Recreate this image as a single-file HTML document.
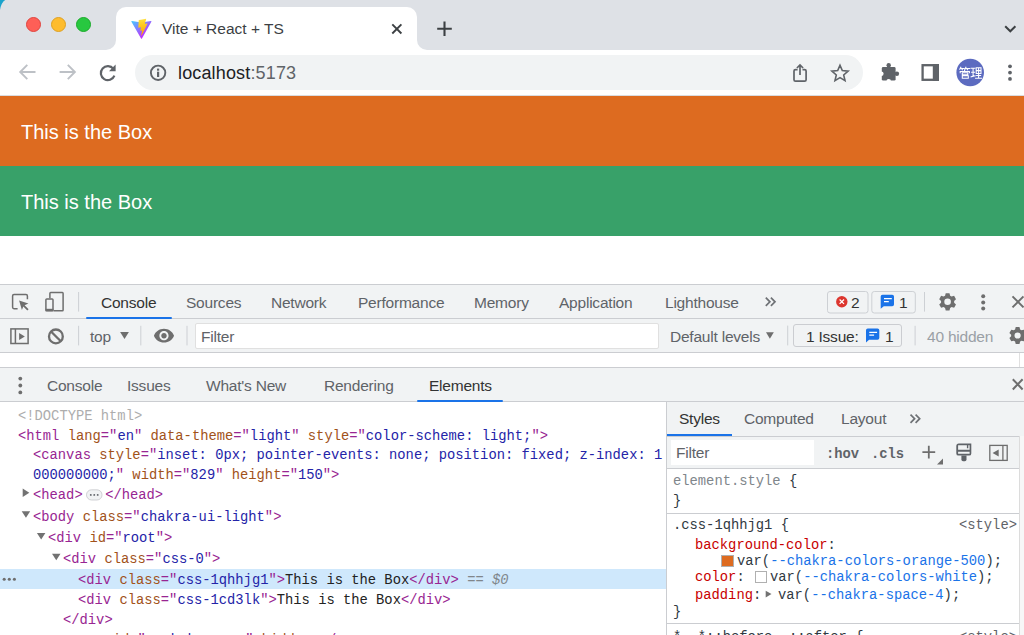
<!DOCTYPE html>
<html><head><meta charset="utf-8">
<style>
*{margin:0;padding:0;box-sizing:border-box}
html,body{width:1024px;height:635px;overflow:hidden;background:#fff;position:relative}
body{font-family:"Liberation Sans",sans-serif}
.a{position:absolute}
.t{position:absolute;white-space:pre;line-height:1}
.s15{font-size:15.5px;letter-spacing:-0.22px}
.m{font-family:"Liberation Mono",monospace;font-size:13.8px}
svg{position:absolute;overflow:visible}
/* devtools colors */
.tg{color:#982592}
.an{color:#a1521a}
.av{color:#2424a8}
.tx{color:#222}
.gr{color:#adadad}
.pn{color:#c80000}
.vn{color:#1a73e8}
</style></head>
<body>
<!-- ===== tab strip ===== -->
<div class="a" style="left:0;top:0;width:1024px;height:50px;background:#dee1e6"></div>
<svg width="12" height="12" style="left:0;top:0"><path d="M0,0 H5.2 Q1.2,2.5 0,10 Z" fill="#1ba3cc"/></svg>
<!-- traffic lights -->
<div class="a" style="left:26.25px;top:17px;width:15px;height:15px;border-radius:50%;background:#fe5f57;border:0.5px solid #e0443e"></div>
<div class="a" style="left:51.25px;top:17px;width:15px;height:15px;border-radius:50%;background:#febc2e;border:0.5px solid #dea123"></div>
<div class="a" style="left:76.25px;top:17px;width:15px;height:15px;border-radius:50%;background:#28c840;border:0.5px solid #1aab29"></div>
<!-- active tab -->
<div class="a" style="left:116px;top:7px;width:301px;height:45px;background:#fff;border-radius:10px 10px 0 0"></div>
<div class="a" style="left:106px;top:40px;width:10px;height:10px;background:#fff"></div>
<div class="a" style="left:96px;top:30px;width:20px;height:20px;background:#dee1e6;border-radius:0 0 10px 0"></div>
<div class="a" style="left:417px;top:40px;width:10px;height:10px;background:#fff"></div>
<div class="a" style="left:417px;top:30px;width:20px;height:20px;background:#dee1e6;border-radius:0 0 0 10px"></div>

<!-- ===== toolbar ===== -->
<div class="a" style="left:0;top:50px;width:1024px;height:45px;background:#fff"></div>
<div class="a" style="left:0;top:95px;width:1024px;height:1px;background:#dadce0"></div>
<div class="a" style="left:135px;top:55px;width:728px;height:35px;background:#f1f3f4;border-radius:17.5px"></div>

<!-- ===== page ===== -->
<div class="a" style="left:0;top:96px;width:1024px;height:70px;background:#dd6b20"></div>
<div class="a" style="left:0;top:166px;width:1024px;height:70px;background:#38a169"></div>
<div class="t" style="left:21px;top:122px;font-size:20px;color:#fff">This is the Box</div>
<div class="t" style="left:21px;top:192px;font-size:20px;color:#fff">This is the Box</div>

<!-- ===== devtools main tab bar ===== -->
<div class="a" style="left:0;top:284px;width:1024px;height:1px;background:#cbcdd1"></div>
<div class="a" style="left:0;top:285px;width:1024px;height:33px;background:#f1f3f4"></div>
<div class="a" style="left:0;top:318px;width:1024px;height:1px;background:#cbcdd1"></div>
<div class="a" style="left:86px;top:317px;width:86px;height:2px;background:#1a73e8;border-radius:1px"></div>

<!-- console toolbar -->
<div class="a" style="left:0;top:319px;width:1024px;height:33px;background:#f1f3f4"></div>
<div class="a" style="left:0;top:352px;width:1024px;height:1px;background:#cbcdd1"></div>
<div class="a" style="left:195px;top:323px;width:464px;height:26px;background:#fff;border:1px solid #e0e0e0;border-radius:2px"></div>
<div class="a" style="left:793px;top:324px;width:109px;height:23px;border:1px solid #cbcdd1;border-radius:3px"></div>

<!-- console content -->
<div class="a" style="left:0;top:353px;width:1024px;height:14px;background:#fff"></div>
<div class="a" style="left:1019px;top:353px;width:1px;height:14px;background:#e0e0e0"></div>

<!-- drawer tab bar -->
<div class="a" style="left:0;top:367px;width:1024px;height:1px;background:#cbcdd1"></div>
<div class="a" style="left:0;top:368px;width:1024px;height:33px;background:#f1f3f4"></div>
<div class="a" style="left:0;top:401px;width:1024px;height:1px;background:#cbcdd1"></div>
<div class="a" style="left:417px;top:400px;width:86px;height:2px;background:#1a73e8;border-radius:1px"></div>

<!-- elements panel -->
<div class="a" style="left:0;top:402px;width:666px;height:233px;background:#fff"></div>
<div class="a" style="left:0;top:569px;width:666px;height:20px;background:#cfe8fc"></div>
<div class="a" style="left:666px;top:402px;width:1px;height:233px;background:#cbcdd1"></div>

<!-- styles pane -->
<div class="a" style="left:667px;top:402px;width:357px;height:233px;background:#f1f3f4"></div>
<div class="a" style="left:667px;top:436px;width:357px;height:1px;background:#cbcdd1"></div>
<div class="a" style="left:667px;top:434px;width:65px;height:2px;background:#1a73e8"></div>
<div class="a" style="left:671px;top:440px;width:143px;height:25px;background:#fff"></div>
<div class="a" style="left:667px;top:468px;width:352px;height:1px;background:#cbcdd1"></div>
<div class="a" style="left:667px;top:469px;width:352px;height:44px;background:#fff"></div>
<div class="a" style="left:667px;top:513px;width:352px;height:1px;background:#cbcdd1"></div>
<div class="a" style="left:667px;top:514px;width:352px;height:109px;background:#fff"></div>
<div class="a" style="left:667px;top:623px;width:352px;height:1px;background:#cbcdd1"></div>
<div class="a" style="left:667px;top:624px;width:352px;height:11px;background:#fff"></div>
<div class="a" style="left:1019px;top:436px;width:1px;height:199px;background:#dcdcdc"></div>
<div class="a" style="left:1020px;top:436px;width:4px;height:199px;background:#f7f7f7"></div>


<!-- browser text -->
<div class="t" style="left:162px;top:21px;font-size:15.5px;color:#3c4043">Vite + React + TS</div>
<div class="t" style="left:178px;top:64px;font-size:18px;color:#202124;letter-spacing:0.15px">localhost<span style="color:#5f6368">:5173</span></div>

<!-- devtools main tabs -->
<div class="t s15" style="left:101px;top:295px;color:#333">Console</div>
<div class="t s15" style="left:186px;top:295px;color:#5f6368">Sources</div>
<div class="t s15" style="left:271px;top:295px;color:#5f6368">Network</div>
<div class="t s15" style="left:358px;top:295px;color:#5f6368">Performance</div>
<div class="t s15" style="left:474px;top:295px;color:#5f6368">Memory</div>
<div class="t s15" style="left:559px;top:295px;color:#5f6368">Application</div>
<div class="t s15" style="left:665px;top:295px;color:#5f6368">Lighthouse</div>
<div class="t s15" style="left:851px;top:295px;color:#333">2</div>
<div class="t s15" style="left:899px;top:295px;color:#333">1</div>

<!-- console toolbar -->
<div class="t s15" style="left:90px;top:329px;color:#5f6368">top</div>
<div class="t s15" style="left:201px;top:329px;color:#5f6368">Filter</div>
<div class="t s15" style="left:670px;top:329px;color:#5f6368">Default levels</div>
<div class="t s15" style="left:806px;top:329px;color:#333">1 Issue:</div>
<div class="t s15" style="left:885px;top:329px;color:#333">1</div>
<div class="t s15" style="left:927px;top:329px;color:#9aa0a6">40 hidden</div>

<!-- drawer tabs -->
<div class="t s15" style="left:47px;top:378px;color:#5f6368">Console</div>
<div class="t s15" style="left:127px;top:378px;color:#5f6368">Issues</div>
<div class="t s15" style="left:206px;top:378px;color:#5f6368">What's New</div>
<div class="t s15" style="left:324px;top:378px;color:#5f6368">Rendering</div>
<div class="t s15" style="left:429px;top:378px;color:#333">Elements</div>

<!-- styles tabs -->
<div class="t s15" style="left:679px;top:411px;color:#333">Styles</div>
<div class="t s15" style="left:744px;top:411px;color:#5f6368">Computed</div>
<div class="t s15" style="left:841px;top:411px;color:#5f6368">Layout</div>
<div class="t s15" style="left:676px;top:445px;color:#5f6368">Filter</div>
<div class="t m" style="left:826px;top:448px;font-weight:bold;color:#5f6368">:hov</div>
<div class="t m" style="left:871px;top:448px;font-weight:bold;color:#5f6368">.cls</div>

<!-- elements tree -->
<div class="t m gr" style="left:18px;top:410px">&lt;!DOCTYPE html&gt;</div>
<div class="t m" style="left:18px;top:430px"><span class="tg">&lt;html</span> <span class="an">lang</span><span class="tg">="</span><span class="av">en</span><span class="tg">"</span> <span class="an">data-theme</span><span class="tg">="</span><span class="av">light</span><span class="tg">"</span> <span class="an">style</span><span class="tg">="</span><span class="av">color-scheme: light;</span><span class="tg">"&gt;</span></div>
<div class="t m" style="left:33px;top:449px"><span class="tg">&lt;canvas</span> <span class="an">style</span><span class="tg">="</span><span class="av">inset: 0px; pointer-events: none; position: fixed; z-index: 1</span></div>
<div class="t m" style="left:33px;top:469px"><span class="av">000000000;</span><span class="tg">"</span> <span class="an">width</span><span class="tg">="</span><span class="av">829</span><span class="tg">"</span> <span class="an">height</span><span class="tg">="</span><span class="av">150</span><span class="tg">"&gt;</span></div>
<div class="t m" style="left:33px;top:489px"><span class="tg">&lt;head&gt;</span><span style="display:inline-block;width:22.5px"></span><span class="tg">&lt;/head&gt;</span></div>
<div class="t m" style="left:33px;top:511px"><span class="tg">&lt;body</span> <span class="an">class</span><span class="tg">="</span><span class="av">chakra-ui-light</span><span class="tg">"&gt;</span></div>
<div class="t m" style="left:48px;top:532px"><span class="tg">&lt;div</span> <span class="an">id</span><span class="tg">="</span><span class="av">root</span><span class="tg">"&gt;</span></div>
<div class="t m" style="left:63px;top:553px"><span class="tg">&lt;div</span> <span class="an">class</span><span class="tg">="</span><span class="av">css-0</span><span class="tg">"&gt;</span></div>
<div class="t m" style="left:78px;top:574px"><span class="tg">&lt;div</span> <span class="an">class</span><span class="tg">="</span><span class="av">css-1qhhjg1</span><span class="tg">"&gt;</span><span class="tx">This is the Box</span><span class="tg">&lt;/div&gt;</span> <span style="color:#80868b">== <i>$0</i></span></div>
<div class="t m" style="left:78px;top:594px"><span class="tg">&lt;div</span> <span class="an">class</span><span class="tg">="</span><span class="av">css-1cd3lk</span><span class="tg">"&gt;</span><span class="tx">This is the Box</span><span class="tg">&lt;/div&gt;</span></div>
<div class="t m" style="left:63px;top:614px"><span class="tg">&lt;/div&gt;</span></div>
<div class="t m" style="left:63px;top:634px"><span class="tg">&lt;span</span> <span class="an">id</span><span class="tg">="</span><span class="av">__chakra_env</span><span class="tg">"</span> <span class="an">hidden</span><span class="tg">&gt;&lt;/span&gt;</span></div>

<!-- styles rules -->
<div class="t m" style="left:673px;top:475px;color:#303942"><span style="color:#80868b">element.style</span> {</div>
<div class="t m" style="left:673px;top:495px;color:#303942">}</div>
<div class="t m" style="left:673px;top:519px;color:#303942">.css-1qhhjg1 {</div>
<div class="t m" style="left:959px;top:519px;color:#5f6368">&lt;style&gt;</div>
<div class="t m" style="left:695px;top:539px;color:#303942"><span class="pn">background-color</span>:</div>
<div class="t m" style="left:737px;top:555px;color:#303942">var(<span class="vn">--chakra-colors-orange-500</span>);</div>
<div class="t m" style="left:695px;top:571px;color:#303942"><span class="pn">color</span>: </div>
<div class="t m" style="left:770px;top:571px;color:#303942">var(<span class="vn">--chakra-colors-white</span>);</div>
<div class="t m" style="left:695px;top:589px;color:#303942"><span class="pn">padding</span>:</div>
<div class="t m" style="left:778px;top:589px;color:#303942">var(<span class="vn">--chakra-space-4</span>);</div>
<div class="t m" style="left:673px;top:606px;color:#303942">}</div>
<div class="t m" style="left:673px;top:631px;color:#303942">*, *::before, ::after {</div>
<div class="t m" style="left:959px;top:631px;color:#5f6368">&lt;style&gt;</div>
<div class="a" style="left:721px;top:555px;width:13px;height:12px;background:#dd6b20;border:1px solid #b0b0b0"></div>
<div class="a" style="left:755px;top:571px;width:12px;height:12px;background:#fff;border:1px solid #b0b0b0"></div>

<svg width="1024" height="635" style="left:0;top:0" viewBox="0 0 1024 635">
<defs>
<linearGradient id="vg0" x1="6" y1="33" x2="235" y2="344" gradientUnits="userSpaceOnUse"><stop stop-color="#41D1FF"/><stop offset="1" stop-color="#BD34FE"/></linearGradient>
<linearGradient id="vg1" x1="194.651" y1="8.818" x2="236.076" y2="292.989" gradientUnits="userSpaceOnUse"><stop stop-color="#FFEA83"/><stop offset="0.083" stop-color="#FFDD35"/><stop offset="1" stop-color="#FFA800"/></linearGradient>
</defs>
<g transform="translate(130.9,18.6) scale(0.0512)">
<path d="M399.641 59.5246L215.643 388.545C211.844 395.338 202.084 395.378 198.228 388.618L10.5817 59.5563C6.38087 52.1896 12.6802 43.2665 21.0281 44.7586L205.223 77.6824C206.398 77.8924 207.601 77.8904 208.776 77.6763L389.119 44.8058C397.439 43.2894 403.768 52.1434 399.641 59.5246Z" fill="url(#vg0)"/>
<path d="M292.965 1.5744L156.801 28.2552C154.563 28.6937 152.906 30.5903 152.771 32.8664L144.395 174.33C144.198 177.662 147.258 180.248 150.51 179.498L188.42 170.749C191.967 169.931 195.172 173.055 194.443 176.622L183.18 231.775C182.422 235.487 185.907 238.661 189.532 237.56L212.947 230.446C216.577 229.344 220.065 232.527 219.297 236.242L201.398 322.875C200.278 328.294 207.486 331.249 210.492 326.603L212.5 323.5L323.454 102.072C325.312 98.3645 322.108 94.137 318.036 94.9228L279.014 102.454C275.347 103.161 272.227 99.746 273.262 96.1583L298.731 7.86689C299.767 4.27314 296.636 0.855181 292.965 1.5744Z" fill="url(#vg1)"/>
</g>
<!-- tab close -->
<path d="M392.3,24.4 L401.4,33.5 M401.4,24.4 L392.3,33.5" stroke="#3c4043" stroke-width="1.9" fill="none"/>
<!-- new tab + -->
<path d="M444.5,21.5 V36 M437.2,28.7 H451.8" stroke="#3c4043" stroke-width="2.1" fill="none"/>
<!-- chevron -->
<path d="M1005.2,26.3 L1010.3,31.3 L1015.4,26.3" stroke="#3c4043" stroke-width="2" fill="none"/>

<!-- back / forward -->
<path d="M35.5,72 H20.2 M27.3,64.9 L20.2,72 L27.3,79.1" stroke="#bdc1c6" stroke-width="1.9" fill="none"/>
<path d="M59.6,72 H74.9 M67.8,64.9 L74.9,72 L67.8,79.1" stroke="#bdc1c6" stroke-width="1.9" fill="none"/>
<!-- reload -->
<g transform="translate(-1.2,-0.4)"><path d="M114.6,69.3 A7,7 0 1,0 115.6,76" stroke="#5f6368" stroke-width="2.2" fill="none"/>
<path d="M116.8,65 V71.6 H110.2 Z" fill="#5f6368"/></g>
<!-- info -->
<circle cx="158.1" cy="72.8" r="7.2" stroke="#5f6368" stroke-width="1.9" fill="none"/>
<rect x="157" y="68.6" width="2.2" height="2.1" fill="#5f6368"/>
<rect x="157" y="71.7" width="2.2" height="5.3" fill="#5f6368"/>
<!-- share -->
<path d="M797.6,69.6 H795.5 Q794,69.6 794,71.1 V79.7 Q794,81.2 795.5,81.2 H804.6 Q806.1,81.2 806.1,79.7 V71.1 Q806.1,69.6 804.6,69.6 H802.5" stroke="#5f6368" stroke-width="1.7" fill="none"/>
<path d="M800,75 V65 M796.9,68 L800,64.9 L803.1,68" stroke="#5f6368" stroke-width="1.7" fill="none"/>
<!-- star -->
<path d="M840,65.2 L842.3,70.6 L848.1,71.1 L843.7,75 L845,80.6 L840,77.6 L835,80.6 L836.3,75 L831.9,71.1 L837.7,70.6 Z" stroke="#5f6368" stroke-width="1.6" fill="none" stroke-linejoin="miter"/>
<!-- puzzle -->
<g fill="#5f6368">
<rect x="881.8" y="67" width="13.8" height="13.6" rx="1.4"/>
<circle cx="888.7" cy="65.3" r="2.2"/>
<circle cx="896.9" cy="73.8" r="2.2"/>
</g>
<circle cx="881.3" cy="73.8" r="2.3" fill="#fff"/>
<circle cx="888.7" cy="81.2" r="2.3" fill="#fff"/>
<!-- sidebar -->
<rect x="922.6" y="65.2" width="15.2" height="14.6" stroke="#5f6368" stroke-width="2.3" fill="none"/>
<rect x="932.8" y="64" width="6.2" height="17" fill="#5f6368"/>
<!-- avatar -->
<circle cx="970.2" cy="72.5" r="13.8" fill="#5c6bc0"/>
<g stroke="#fff" stroke-width="1.05" fill="none" stroke-linecap="square">
<path d="M960.8,67.3 L959.8,69.3 M960.3,68.4 H964 M961.6,68.6 L962.4,69.8 M965.9,67.3 L964.9,69.3 M965.4,68.4 H969.8 M966.8,68.6 L967.6,69.8"/>
<path d="M964.6,69.9 V70.9 M960.2,71.4 H969.4 M960.2,71.4 V72.6 M969.4,71.4 V72.6"/>
<path d="M962.3,72.8 V78.3 M962.3,72.8 H967.8 V74.8 H962.3 M962.3,75.8 H968.3 V78.3 H962.3"/>
<path d="M971.2,68.2 H975 M971.6,72.2 H974.6 M971.1,76.8 L975.2,75.8 M973.1,68.2 V76.3"/>
<path d="M976.2,67.7 H981 V73.5 H976.2 Z M976.2,70.6 H981 M978.6,67.7 V78 M976.6,75.5 H980.6 M975.6,78.2 H981.6"/>
</g>
<!-- menu dots -->
<circle cx="1010" cy="66.3" r="1.9" fill="#5f6368"/>
<circle cx="1010" cy="72.6" r="1.9" fill="#5f6368"/>
<circle cx="1010" cy="78.9" r="1.9" fill="#5f6368"/>

<!-- ===== devtools ===== -->
<!-- inspect -->
<path d="M27.4,299.2 V296 Q27.4,294.6 26,294.6 H14 Q12.6,294.6 12.6,296 V307.3 Q12.6,308.7 14,308.7 H17.6" stroke="#6e6e6e" stroke-width="1.5" fill="none"/>
<path d="M19.1,300.6 L28.4,303.6 L24.6,305.2 L28.6,309.2 L27.3,310.5 L23.3,306.5 L21.9,310 Z" fill="#6e6e6e"/>
<!-- device -->
<path d="M49.9,298.3 V293.4 Q49.9,292.6 50.7,292.6 H62.4 Q63.1,292.6 63.1,293.4 V310 Q63.1,310.8 62.4,310.8 H53.6" stroke="#6e6e6e" stroke-width="1.5" fill="none"/>
<rect x="45.9" y="298.9" width="7.1" height="11.9" rx="0.9" stroke="#6e6e6e" stroke-width="1.5" fill="none"/>
<rect x="45.6" y="308.8" width="7.7" height="2.4" fill="#6e6e6e"/>
<rect x="78.1" y="292" width="1" height="19.6" fill="#cdd0d4"/>
<!-- >> main -->
<path d="M765.8,297.7 L769.9,301.8 L765.8,305.9 M770.9,297.7 L775,301.8 L770.9,305.9" stroke="#6e7175" stroke-width="1.7" fill="none"/>
<!-- error badge -->
<rect x="827.5" y="291.5" width="40.5" height="21.5" rx="2.5" stroke="#cdd0d4" stroke-width="1" fill="none"/>
<circle cx="841.8" cy="301.7" r="5.7" fill="#dc362e"/>
<path d="M839.6,299.5 L844,303.9 M844,299.5 L839.6,303.9" stroke="#fff" stroke-width="1.2"/>
<rect x="871.8" y="291.5" width="43.5" height="21.5" rx="2.5" stroke="#cdd0d4" stroke-width="1" fill="none"/>
<path d="M882.5,294.8 H892.2 Q894,294.8 894,296.6 V304.4 Q894,306.2 892.2,306.2 H883.8 L880.7,308.8 V296.6 Q880.7,294.8 882.5,294.8 Z" fill="#1a73e8"/>
<path d="M884,298.7 H891.8 M884,301.6 H888.8" stroke="#fff" stroke-width="1.3"/>
<rect x="924" y="292" width="1" height="19.6" fill="#cdd0d4"/>
<!-- gear main -->
<path d="M945.07,295.71 L945.71,293.20 L949.49,293.20 L950.13,295.71 L951.61,296.56 L954.10,295.87 L955.99,299.13 L954.14,300.95 L954.14,302.65 L955.99,304.47 L954.10,307.73 L951.61,307.04 L950.13,307.89 L949.49,310.40 L945.71,310.40 L945.07,307.89 L943.59,307.04 L941.10,307.73 L939.21,304.47 L941.06,302.65 L941.06,300.95 L939.21,299.13 L941.10,295.87 L943.59,296.56Z M950.90,301.80 A3.3,3.3 0 1,0 944.30,301.80 A3.3,3.3 0 1,0 950.90,301.80Z" fill="#6e6e6e" fill-rule="evenodd"/>
<!-- dots -->
<circle cx="983.2" cy="296.3" r="2" fill="#6e6e6e"/>
<circle cx="983.2" cy="302.4" r="2" fill="#6e6e6e"/>
<circle cx="983.2" cy="308.5" r="2" fill="#6e6e6e"/>
<!-- close main -->
<path d="M1012.5,296.4 L1023.5,307.4 M1023.5,296.4 L1012.5,307.4" stroke="#6e6e6e" stroke-width="2" fill="none"/>

<!-- console toolbar icons -->
<rect x="10.9" y="328.9" width="17.2" height="14.6" stroke="#6e6e6e" stroke-width="1.5" fill="none"/>
<path d="M15.4,328.9 V343.5" stroke="#6e6e6e" stroke-width="1.5"/>
<path d="M19.1,332.9 L24.8,336.4 L19.1,339.9 Z" fill="#6e6e6e"/>
<circle cx="55.9" cy="336.4" r="6.9" stroke="#6e6e6e" stroke-width="2.3" fill="none"/>
<path d="M51,331.5 L60.8,341.3" stroke="#6e6e6e" stroke-width="2.3"/>
<rect x="78.1" y="325.8" width="1" height="19.6" fill="#cdd0d4"/>
<path d="M120.1,331.9 H128.9 L124.5,338.9 Z" fill="#6e6e6e"/>
<rect x="140.3" y="325.8" width="1" height="19.6" fill="#cdd0d4"/>
<g transform="translate(153,324.7) scale(0.915)"><path d="M12 4.5C7 4.5 2.73 7.61 1 12c1.73 4.39 6 7.5 11 7.5s9.27-3.11 11-7.5c-1.73-4.39-6-7.5-11-7.5zM12 17c-2.76 0-5-2.24-5-5s2.24-5 5-5 5 2.24 5 5-2.24 5-5 5zm0-8c-1.66 0-3 1.34-3 3s1.34 3 3 3 3-1.34 3-3-1.34-3-3-3z" fill="#6e6e6e"/></g>
<rect x="186.5" y="325.8" width="1" height="19.6" fill="#cdd0d4"/>
<path d="M766,332.2 H773.8 L769.9,338.8 Z" fill="#6e6e6e"/>
<rect x="787.2" y="325.6" width="1" height="19.8" fill="#cdd0d4"/>
<g transform="translate(0,1.5)"><path d="M867.8,326.9 H877.5 Q879.3,326.9 879.3,328.7 V336.5 Q879.3,338.3 877.5,338.3 H869.1 L866,340.9 V328.7 Q866,326.9 867.8,326.9 Z" fill="#1a73e8"/>
<path d="M869.3,330.8 H877.1 M869.3,333.7 H874.1" stroke="#fff" stroke-width="1.3"/></g>
<rect x="914.6" y="325.8" width="1" height="19.6" fill="#cdd0d4"/>
<path d="M1015.07,329.51 L1015.72,327.11 L1019.48,327.11 L1020.13,329.51 L1021.52,330.31 L1023.92,329.67 L1025.81,332.94 L1024.05,334.70 L1024.05,336.30 L1025.81,338.06 L1023.92,341.33 L1021.52,340.69 L1020.13,341.49 L1019.48,343.89 L1015.72,343.89 L1015.07,341.49 L1013.68,340.69 L1011.28,341.33 L1009.39,338.06 L1011.15,336.30 L1011.15,334.70 L1009.39,332.94 L1011.28,329.67 L1013.68,330.31Z M1020.70,335.50 A3.1,3.1 0 1,0 1014.50,335.50 A3.1,3.1 0 1,0 1020.70,335.50Z" fill="#6e6e6e" fill-rule="evenodd"/>

<!-- drawer -->
<circle cx="20.3" cy="378.6" r="1.9" fill="#6e6e6e"/>
<circle cx="20.3" cy="385.5" r="1.9" fill="#6e6e6e"/>
<circle cx="20.3" cy="392.4" r="1.9" fill="#6e6e6e"/>
<path d="M1012.8,379.2 L1022.6,389.5 M1022.6,379.2 L1012.8,389.5" stroke="#6e6e6e" stroke-width="2" fill="none"/>

<!-- elements triangles -->
<path d="M22.7,488.6 L29.3,492.8 L22.7,497 Z" fill="#727272"/>
<path d="M21.7,511.3 H30.2 L25.95,517.8 Z" fill="#727272"/>
<path d="M36.9,533 H45.4 L41.15,539.5 Z" fill="#727272"/>
<path d="M52,553.8 H60.5 L56.25,560.3 Z" fill="#727272"/>
<!-- head pill -->
<rect x="86.5" y="489.8" width="15.5" height="10.2" rx="5" fill="#f1f3f4" stroke="#c5c7ca" stroke-width="0.8"/>
<circle cx="90.8" cy="494.9" r="0.95" fill="#5f6368"/>
<circle cx="94.25" cy="494.9" r="0.95" fill="#5f6368"/>
<circle cx="97.7" cy="494.9" r="0.95" fill="#5f6368"/>
<!-- selected dots -->
<circle cx="4.2" cy="579.2" r="1.55" fill="#6e6e6e"/>
<circle cx="9.3" cy="579.2" r="1.55" fill="#6e6e6e"/>
<circle cx="14.4" cy="579.2" r="1.55" fill="#6e6e6e"/>

<!-- styles icons -->
<path d="M910.5,414.6 L914.6,418.7 L910.5,422.8 M915.6,414.6 L919.7,418.7 L915.6,422.8" stroke="#6e7175" stroke-width="1.7" fill="none"/>
<path d="M928.8,445.7 V458.5 M922.4,452.1 H935.2" stroke="#6e6e6e" stroke-width="1.8"/>
<path d="M937,464.5 L943,458.5 V464.5 Z" fill="#6e6e6e"/>
<path d="M958.8,443.5 H971.3 V453.4 Q971.3,455.6 969.1,455.6 H958.5 Q956.3,455.6 956.3,453.4 V446 Q956.3,443.5 958.8,443.5 Z M958.1,445.2 H966.9 V448.3 H968.3 V445.2 H969.6 V449.8 H958.1 Z M958.1,451.7 H969.6 V453.8 H958.1 Z" fill="#5f6368" fill-rule="evenodd"/>
<path d="M961.4,455.5 H966.5 V459.6 Q966.5,461.3 964.8,461.3 H963.1 Q961.4,461.3 961.4,459.6 Z" fill="#5f6368"/>
<rect x="989.8" y="445.4" width="17.4" height="15" stroke="#6e6e6e" stroke-width="1.3" fill="none"/>
<path d="M1002.9,445.4 V460.4" stroke="#6e6e6e" stroke-width="1.3"/>
<path d="M998.7,449.4 L992.6,453 L998.7,456.6 Z" fill="#6e6e6e"/>
<path d="M765.7,590.8 L771.5,594.1 L765.7,597.4 Z" fill="#727272"/>
</svg>
</body></html>
